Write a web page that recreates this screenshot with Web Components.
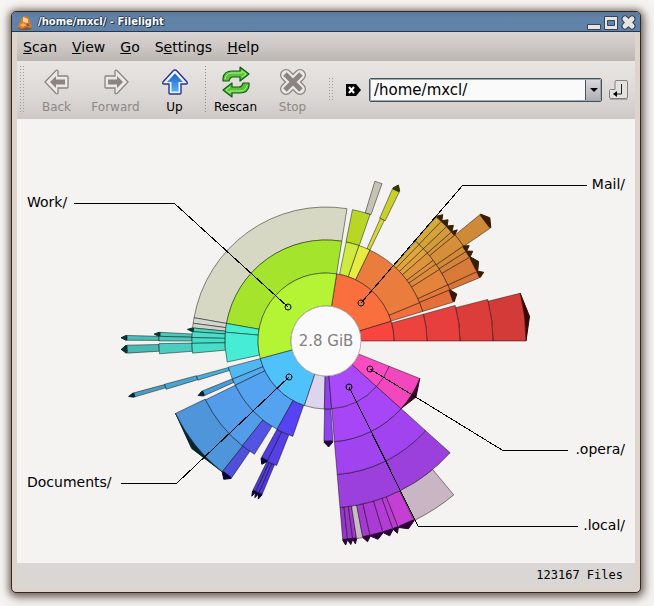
<!DOCTYPE html>
<html lang="en">
<head>
<meta charset="utf-8">
<title>/home/mxcl/ - Filelight</title>
<style>
    body {
        margin: 0;
        padding: 11px 13px 13px 11px;
        background: #f6f4f2;
        font-family: "DejaVu Sans", sans-serif;
        color: #000;
    }
</style>
</head>
<body>

<app-window>
    <title-bar slot="title">/home/mxcl/ - Filelight</title-bar>

    <menu-bar slot="menu">
        <menu-entry><u>S</u>can</menu-entry>
        <menu-entry><u>V</u>iew</menu-entry>
        <menu-entry><u>G</u>o</menu-entry>
        <menu-entry>S<u>e</u>ttings</menu-entry>
        <menu-entry><u>H</u>elp</menu-entry>
    </menu-bar>

    <tool-bar slot="tools">
        <tool-button disabled>
            <svg slot="icon" width="28" height="28" viewBox="0 0 28 28">
                <path d="M2 14 13 2.500q2-1 2 1v4.500h9q1 0 1 1v10q0 1-1 1h-9v4.500q0 2-2 1z" fill="#ebe8e6" stroke="#8b8583" stroke-width="1.300"/>
                <path d="M7 14 13 8v3.500h9v5h-9V20z" fill="#8b8481"/>
            </svg>
            Back
        </tool-button>
        <tool-button disabled>
            <svg slot="icon" width="28" height="28" viewBox="0 0 28 28">
                <path d="M26 14 15 2.500q-2-1-2 1v4.500H4q-1 0-1 1v10q0 1 1 1h9v4.500q0 2 2 1z" fill="#ebe8e6" stroke="#8b8583" stroke-width="1.300"/>
                <path d="M21 14 15 8v3.500H6v5h9V20z" fill="#8b8481"/>
            </svg>
            Forward
        </tool-button>
        <tool-button>
            <svg slot="icon" width="28" height="28" viewBox="0 0 28 28">
                <defs>
                    <linearGradient id="blue" x1="0" y1="0" x2="0" y2="1">
                        <stop offset="0" stop-color="#1b62cc"/>
                        <stop offset="1" stop-color="#59aef5"/>
                    </linearGradient>
                </defs>
                <path d="M14 2q1 0 2 1l10 11q1 2-1 2h-5v9q0 1-1 1H9q-1 0-1-1v-9H3q-2 0-1-2L12 3q1-1 2-1z" fill="#eef4fc" stroke="#28319c" stroke-width="1.400"/>
                <path d="M14 5.500 22 14h-4.500v9.500h-7V14H6z" fill="url(#blue)"/>
            </svg>
            Up
        </tool-button>
        <tool-separator></tool-separator>
        <tool-button narrow>
            <svg slot="icon" width="30" height="32" viewBox="0 0 30 32">
                <g fill="#58c436" stroke="#145a1c" stroke-width="1.200" stroke-linejoin="round">
                    <path d="M2 15V12Q3 5 11 5h8V1l9 7-9 7v-4h-7q-3 0-4 4z"/>
                    <path d="M4 13q1-6 7-6h10V5l4 3-4 3" fill="none" stroke="#b4ef8b" stroke-width="1"/>
                </g>
                <g fill="#58c436" stroke="#145a1c" stroke-width="1.200" stroke-linejoin="round" transform="rotate(180 15 16)">
                    <path d="M2 15V12Q3 5 11 5h8V1l9 7-9 7v-4h-7q-3 0-4 4z"/>
                    <path d="M4 13q1-6 7-6h10V5l4 3-4 3" fill="none" stroke="#b4ef8b" stroke-width="1"/>
                </g>
            </svg>
            Rescan
        </tool-button>
        <tool-button narrow disabled>
            <svg slot="icon" width="28" height="28" viewBox="0 0 28 28">
                <g fill="none" stroke-linejoin="round">
                    <path d="M7 7 21 21M21 7 7 21" stroke="#8b8583" stroke-width="12" stroke-linecap="round"/>
                    <path d="M7 7 21 21M21 7 7 21" stroke="#ebe8e6" stroke-width="9.500" stroke-linecap="round"/>
                    <path d="M6 6 22 22M22 6 6 22" stroke="#8b8481" stroke-width="5"/>
                </g>
            </svg>
            Stop
        </tool-button>
        <location-bar slot="location" path="/home/mxcl/"></location-bar>
    </tool-bar>

    <disk-map total="2.8 GiB"></disk-map>

    <status-bar slot="status">123167 Files</status-bar>
</app-window>

<script>
class AppWindow extends HTMLElement {
    constructor() {
        super();
        this.attachShadow({ mode: "open" });

        this.shadowRoot.innerHTML = `
            <style>
                :host {
                    display: block;
                    border: 1px solid #33261f;
                    border-radius: 5px;
                    background: #ddd5cc;
                    box-shadow: 0 1px 7px 2px rgba(70, 52, 45, 0.65), 2px 3px 12px 2px rgba(70, 52, 45, 0.35);
                    overflow: hidden;
                }

                .frame {
                    display: flex;
                    flex-direction: column;
                    padding: 0 5px 5px;
                }
            </style>
            <slot name="title"></slot>
            <div class="frame">
                <slot name="menu"></slot>
                <slot name="tools"></slot>
                <slot></slot>
                <slot name="status"></slot>
            </div>
        `;
    }
}

class TitleBar extends HTMLElement {
    constructor() {
        super();
        this.attachShadow({ mode: "open" });

        this.shadowRoot.innerHTML = `
            <style>
                :host {
                    display: flex;
                    align-items: center;
                    height: 19px;
                    padding: 0 4px 0 5px;
                    border-bottom: 1px solid #263850;
                    background: linear-gradient(#5a7898, #6283a8 30%, #6082a8);
                    color: #fff;
                    font-size: 10px;
                    font-weight: bold;
                    line-height: 19px;
                    text-shadow: 1px 1px 0 #1f3146, -1px 0 0 #34485f, 0 -1px 0 #34485f, 1px 0 0 #34485f;
                }

                .name {
                    flex: 1;
                    padding-left: 5px;
                }

                button {
                    display: flex;
                    padding: 0;
                    margin-left: 2px;
                    border: 0;
                    background: none;
                }

                svg {
                    display: block;
                }
            </style>
            <svg width="16" height="16" viewBox="0 0 16 16">
                <ellipse cx="8" cy="14" rx="7" ry="2" fill="#7a5a46"/>
                <path d="M1 13 2 9 4 8 4 5 7 2 11 3 13 7 13 10 15 12 14 14 9 13 5 15z" fill="#d9792c"/>
                <path d="M6 3 11 5 11 9 6 8z" fill="#ffd887"/>
                <path d="M3 11 6 9 9 11 6 13z" fill="#f3b064"/>
                <path d="M10 9 13 12 10 12z" fill="#a04a1c"/>
            </svg>
            <span class="name"><slot></slot></span>
            <button aria-label="Minimize">
                <svg width="15" height="16"><path d="M.5 10.500h13v5H.5z" fill="#e8e4e2" stroke="#33435a"/></svg>
            </button>
            <button aria-label="Maximize">
                <svg width="15" height="16"><path d="M.5 2.500h13v13H.5zM3.500 6.500v5h7v-5z" fill="#e8e4e2" fill-rule="evenodd" stroke="#33435a"/></svg>
            </button>
            <button aria-label="Close">
                <svg width="15" height="16">
                    <path d="M4 5 11 12M11 5 4 12" stroke="#33435a" stroke-width="7" stroke-linecap="round"/>
                    <path d="M4 5 11 12M11 5 4 12" stroke="#e8e4e2" stroke-width="5" stroke-linecap="round"/>
                </svg>
            </button>
        `;
    }
}

class MenuBar extends HTMLElement {
    constructor() {
        super();
        this.attachShadow({ mode: "open" });

        this.shadowRoot.innerHTML = `
            <style>
                :host {
                    display: flex;
                    align-items: center;
                    gap: 15px;
                    height: 29px;
                    padding: 0 6px;
                    background: linear-gradient(#d7d3d0, #cdc8c5 50%, #bcb6b2);
                }
            </style>
            <slot></slot>
        `;
    }
}

class MenuEntry extends HTMLElement {
    constructor() {
        super();
        this.attachShadow({ mode: "open" });

        this.shadowRoot.innerHTML = `
            <style>
                :host {
                    display: block;
                }

                button {
                    display: block;
                    padding: 0;
                    border: 0;
                    background: none;
                    color: inherit;
                    font: 14px/20px "DejaVu Sans", sans-serif;
                }
            </style>
            <button><slot></slot></button>
        `;
    }
}

class ToolBar extends HTMLElement {
    constructor() {
        super();
        this.attachShadow({ mode: "open" });

        this.shadowRoot.innerHTML = `
            <style>
                :host {
                    display: flex;
                    align-items: center;
                    height: 58px;
                    padding: 0 6px 0 3px;
                    background: linear-gradient(#e8e5e3, #dcd8d5 60%, #cec9c6);
                }

                .handle {
                    flex: none;
                    width: 6px;
                    height: 48px;
                    margin-right: 1px;
                    background: conic-gradient(from 270deg at 1px 1px, #a29c99 90deg, transparent 0) 0 0 / 3px 3px;
                }

                .short {
                    height: 24px;
                    margin: 0 10px 0 8px;
                }

                ::slotted(location-bar) {
                    flex: 1;
                    min-width: 0;
                }
            </style>
            <div class="handle"></div>
            <slot></slot>
            <div class="handle short"></div>
            <slot name="location"></slot>
        `;
    }
}

class ToolSeparator extends HTMLElement {
    constructor() {
        super();
        this.attachShadow({ mode: "open" });

        this.shadowRoot.innerHTML = `
            <style>
                :host {
                    display: block;
                    width: 1px;
                    height: 48px;
                    margin: 0 1px;
                    background: repeating-linear-gradient(#8f8986 0 1px, transparent 1px 3px);
                }
            </style>
        `;
    }
}

class ToolButton extends HTMLElement {
    constructor() {
        super();
        this.attachShadow({ mode: "open" });

        this.shadowRoot.innerHTML = `
            <style>
                :host {
                    display: block;
                    flex: none;
                    width: 59px;
                }

                :host([narrow]) {
                    width: 57px;
                }

                button {
                    display: flex;
                    flex-direction: column;
                    align-items: center;
                    width: 100%;
                    padding: 0;
                    border: 0;
                    background: none;
                    color: #000;
                    font: 12px/16px "DejaVu Sans", sans-serif;
                }

                button:disabled {
                    color: #8d8886;
                }

                .icon {
                    display: flex;
                    align-items: center;
                    height: 34px;
                }
            </style>
            <button>
                <span class="icon"><slot name="icon"></slot></span>
                <span><slot></slot></span>
            </button>
        `;
    }

    connectedCallback() {
        this.shadowRoot.querySelector("button").disabled = this.hasAttribute("disabled");
    }
}

class LocationBar extends HTMLElement {
    constructor() {
        super();
        this.attachShadow({ mode: "open" });

        this.shadowRoot.innerHTML = `
            <style>
                :host {
                    display: flex;
                    align-items: center;
                }

                button {
                    display: flex;
                    align-items: center;
                    justify-content: center;
                    flex: none;
                    padding: 0;
                    border: 0;
                    background: none;
                }

                .combo {
                    display: flex;
                    flex: 1;
                    min-width: 0;
                    height: 24px;
                    margin: 0 6px 0 7px;
                    box-sizing: border-box;
                    border: 1px solid #45535f;
                    border-radius: 2px;
                    outline: 1px solid #9ba5ac;
                    outline-offset: -2px;
                    background: #fafafa;
                }

                input {
                    flex: 1;
                    min-width: 0;
                    padding: 0 4px;
                    border: 0;
                    outline: 0;
                    background: none;
                    color: #000;
                    font: 15px/20px "DejaVu Sans", sans-serif;
                }

                .drop {
                    width: 16px;
                    border-left: 1px solid #45535f;
                    background: linear-gradient(#dcdadd, #aeabb3);
                }
            </style>
            <button aria-label="Clear location">
                <svg width="17" height="14" viewBox="0 0 17 14">
                    <path d="M1 1h10l5 6-5 6H1z" fill="#000"/>
                    <path d="M4 4 9 10M9 4 4 10" stroke="#fff" stroke-width="2"/>
                </svg>
            </button>
            <div class="combo">
                <input type="text" aria-label="Location">
                <button class="drop" aria-label="Show history">
                    <svg width="8" height="4"><path d="M0 0h8L4 4z" fill="#000"/></svg>
                </button>
            </div>
            <button aria-label="Go">
                <svg width="21" height="22" viewBox="0 0 21 22">
                    <path d="M8 1.500h10q1.500 0 1.500 1.500v15q0 1.500-1.500 1.500H3Q1.500 19.500 1.500 18v-6.500q0-1 1-1H7V3q0-1.500 1-1.500z" fill="#e4e1e1" stroke="#85807f"/>
                    <path d="M2 20.500h17.500" stroke="#a7a2a0"/>
                    <path d="M13.500 5v10H6" fill="none" stroke="#222"/>
                    <path d="M9 12v6l-4-3z" fill="#000"/>
                </svg>
            </button>
        `;
    }

    connectedCallback() {
        this.shadowRoot.querySelector("input").value = this.getAttribute("path") || "/";
    }
}

// ring, start angle, end angle, fill, dark tip. Angles in degrees, counterclockwise from east.
const SEGMENTS = [
    [1, 0, 17, "#f94540"], [2, 0, 15.4, "#ee423f"], [3, 0, 15.4, "#e63f3d"], [4, 0, 14.4, "#dc3d3b"], [5, 0, 13.8, "#d33b38", "#3a0505"],

    [1, 17, 81, "#fa6f3e"],
    [2, 17, 22.3, "#f0703d"], [2, 22.3, 64.3, "#ea7c3d"],
    [3, 17, 22.5, "#e56f3a", "#3a1503"], [3, 22.5, 24.8, "#e4783b"], [3, 24.8, 32.3, "#e3833c"], [3, 32.3, 35, "#e08a3b"],
    [3, 35, 37, "#df8e3c"], [3, 37, 41, "#df943c"], [3, 41, 43.5, "#dfa03d"], [3, 43.5, 46.1, "#dea63d"], [3, 46.1, 48, "#deab3d"],
    [4, 22.4, 24.7, "#d87537", "#3a1c03"], [4, 24.7, 30.3, "#d87b38", "#3a1c03"], [4, 30.3, 32.6, "#d58338", "#3a1c03"], [4, 32.6, 34.7, "#d58838", "#3a1c03"],
    [4, 34.7, 39.5, "#d58f38"], [4, 39.5, 41, "#d59438", "#3a1c03"], [4, 41, 43.5, "#d49c38", "#3a2003"], [4, 43.5, 46.1, "#d5a339", "#3a2003"], [4, 46.1, 48.4, "#d5aa3a", "#3a2003"],
    [5, 34.5, 39.4, "#cf8a36", "#3a1c03"],

    [2, 64.3, 71, "#e8ec42"], [2, 71, 78.5, "#cdec3f"],
    [3, 64.2, 66.1, "#d4d834"], [3, 70.8, 78.6, "#b9d525"],
    [4, 63.8, 66.4, "#c9cf2b", "#343603"], [4, 70.4, 73, "#c5c4b4"],

    [1, 81, 195, "#b5f335"],
    [2, 81, 170, "#a5e42c"], [3, 81, 170, "#d7d8c3"],
    [3, 170, 172.4, "#d3d6d0"], [3, 172.4, 174.4, "#cfd4cd"], [3, 174.4, 176, "#49d9c0", "#05342f"],
    [2, 170, 175, "#45efd2"], [2, 175, 192, "#46edd4"],
    [3, 176, 178.5, "#48dfca"], [3, 178.5, 181, "#48dcc8"], [3, 181, 185.2, "#48dcc9"],
    [4, 177, 178.4, "#48c9b9", "#05342f"], [4, 178.4, 180, "#4ac9be"], [4, 180.9, 184.4, "#4bccc0"],
    [5, 178.4, 179.8, "#4bbbb4", "#05342f"], [5, 181.2, 183.5, "#49b9b5", "#05342f"],

    [1, 195, 251.5, "#4fc1fb"],
    [2, 195, 202.2, "#52b8f0"], [2, 202.2, 206, "#51aded"], [2, 206, 241, "#54a3f1"], [2, 241, 250.8, "#5742f4"],
    [3, 195.2, 197, "#4aaedb"], [4, 195, 196.8, "#4aa4cd"], [5, 195.1, 196.3, "#4b9cc0", "#052534"],
    [3, 202, 204.2, "#4b9bd6", "#052534"],
    [3, 206, 231.4, "#529ce9"], [4, 205.7, 231.6, "#4e95da", "#05252f"],
    [3, 231.4, 237.7, "#5354e4"], [4, 231.6, 235.4, "#4f4fda", "#070536"],
    [3, 241, 244, "#4f3de0", "#070536"], [3, 244, 248.4, "#563fe5"],
    [4, 243.9, 245, "#4f3ad8", "#070536"], [4, 245, 246.2, "#4f3ad8", "#070536"], [4, 246.2, 247.4, "#533ad8", "#070536"],

    [1, 251.5, 268.6, "#ddd4ee"],
    [1, 268.6, 274.8, "#8f40ec"], [2, 268.8, 274, "#8c45ee", "#260536"],
    [1, 274.8, 318, "#a84afa"], [2, 274.8, 318, "#a646f7"], [3, 274.8, 318, "#a243f0"], [4, 274.8, 318, "#9b40dc"],
    [5, 274.8, 276.2, "#9636c7", "#2b0536"], [5, 276.2, 277.7, "#9b37c9", "#2b0536"], [5, 277.7, 278.8, "#9f38cb", "#2b0536"],
    [5, 278.8, 280.6, "#c9bac8"], [5, 280.6, 282.8, "#a739d2", "#2b0536"], [5, 282.8, 286.6, "#ac3ad4", "#2b0536"],
    [5, 286.6, 289.6, "#b43bd6", "#2b0536"], [5, 289.6, 291.2, "#bb3cd5", "#2b0536"], [5, 291.2, 296.2, "#c53fd5", "#2b0536"],
    [5, 296.2, 309.7, "#c9b5c3"],

    [1, 318, 338.2, "#fb4cc3"], [2, 318, 338.2, "#f247be", "#360524"]
];

// leader line, marker position, text position and anchor
const LABELS = [
    { text: "Work/", line: "271,188 157,84 57,84", dot: [271, 188], x: 10, y: 88, anchor: "start" },
    { text: "Documents/", line: "272,258 160,364 104,364", dot: [272, 258], x: 10, y: 368, anchor: "start" },
    { text: "Mail/", line: "344,184 446,66 570,66", dot: [344, 184], x: 608, y: 70, anchor: "end" },
    { text: ".opera/", line: "353,250 485,331 551,331", dot: [353, 250], x: 608, y: 335, anchor: "end" },
    { text: ".local/", line: "332,268 401,407 561,407", dot: [332, 268], x: 608, y: 411, anchor: "end" }
];

class DiskMap extends HTMLElement {
    constructor() {
        super();
        this.attachShadow({ mode: "open" });

        this.shadowRoot.innerHTML = `
            <style>
                :host {
                    display: block;
                    background: #f4f3f1;
                }

                svg {
                    display: block;
                    width: 100%;
                    height: auto;
                }

                text {
                    font: 14px "DejaVu Sans", sans-serif;
                }

                .total {
                    fill: #858080;
                    font-size: 15px;
                    text-anchor: middle;
                }

                polyline, .dot {
                    fill: none;
                    stroke: #000;
                }

                polyline {
                    shape-rendering: crispEdges;
                }
            </style>
            <svg viewBox="0 0 618 444" role="img" aria-label="Disk usage">
                <g class="rings"></g>
                <circle cx="309" cy="222" r="35" fill="#fafafa" stroke="#b9b5b2"/>
                <text class="total" x="309" y="227"></text>
                <g class="labels"></g>
            </svg>
        `;
    }

    point(radius, degrees) {
        const a = degrees * Math.PI / 180;
        return `${(309 + radius * Math.cos(a)).toFixed(2)} ${(222 - radius * Math.sin(a)).toFixed(2)}`;
    }

    segment([ring, start, end, fill, tip]) {
        const inner = 35 + (ring - 1) * 33;
        const outer = inner + 33;
        let out = "";
        if (tip) {
            out += `<path d="M${this.point(outer, start)}L${this.point(outer + 5, (start + end) / 2)}L${this.point(outer, end)}L${this.point(outer - 4, (start + end) / 2)}z" fill="${tip}" stroke="${tip}"/>`;
        }
        // narrow tipped segments are cut straight, so the tip shows as a wedge
        const flat = tip && end - start < 7;
        const edge = flat ? `L${this.point(outer - 1, end)}` : `A${outer} ${outer} 0 0 0 ${this.point(outer, end)}`;
        out += `<path d="M${this.point(inner, start)}L${this.point(flat ? outer - 1 : outer, start)}${edge}L${this.point(inner, end)}A${inner} ${inner} 0 0 1 ${this.point(inner, start)}z" fill="${fill}" stroke="#000" stroke-opacity="0.45"/>`;
        return out;
    }

    connectedCallback() {
        this.shadowRoot.querySelector(".total").textContent = this.getAttribute("total") || "";
        this.shadowRoot.querySelector(".rings").innerHTML = SEGMENTS.slice().sort((a, b) => b[0] - a[0]).map(s => this.segment(s)).join("");
        this.shadowRoot.querySelector(".labels").innerHTML = LABELS.map(l => `
            <polyline points="${l.line}"/>
            <circle class="dot" cx="${l.dot[0]}" cy="${l.dot[1]}" r="3"/>
            <text x="${l.x}" y="${l.y}" text-anchor="${l.anchor}">${l.text}</text>
        `).join("");
    }
}

class StatusBar extends HTMLElement {
    constructor() {
        super();
        this.attachShadow({ mode: "open" });

        this.shadowRoot.innerHTML = `
            <style>
                :host {
                    display: flex;
                    align-items: center;
                    justify-content: flex-end;
                    height: 24px;
                    padding: 0 12px;
                    background: #d9d6d3;
                    font: 12px/24px "DejaVu Sans Mono", monospace;
                }
            </style>
            <slot></slot>
        `;
    }
}

customElements.define("app-window", AppWindow);
customElements.define("title-bar", TitleBar);
customElements.define("menu-bar", MenuBar);
customElements.define("menu-entry", MenuEntry);
customElements.define("tool-bar", ToolBar);
customElements.define("tool-separator", ToolSeparator);
customElements.define("tool-button", ToolButton);
customElements.define("location-bar", LocationBar);
customElements.define("disk-map", DiskMap);
customElements.define("status-bar", StatusBar);
</script>
</body>
</html>
